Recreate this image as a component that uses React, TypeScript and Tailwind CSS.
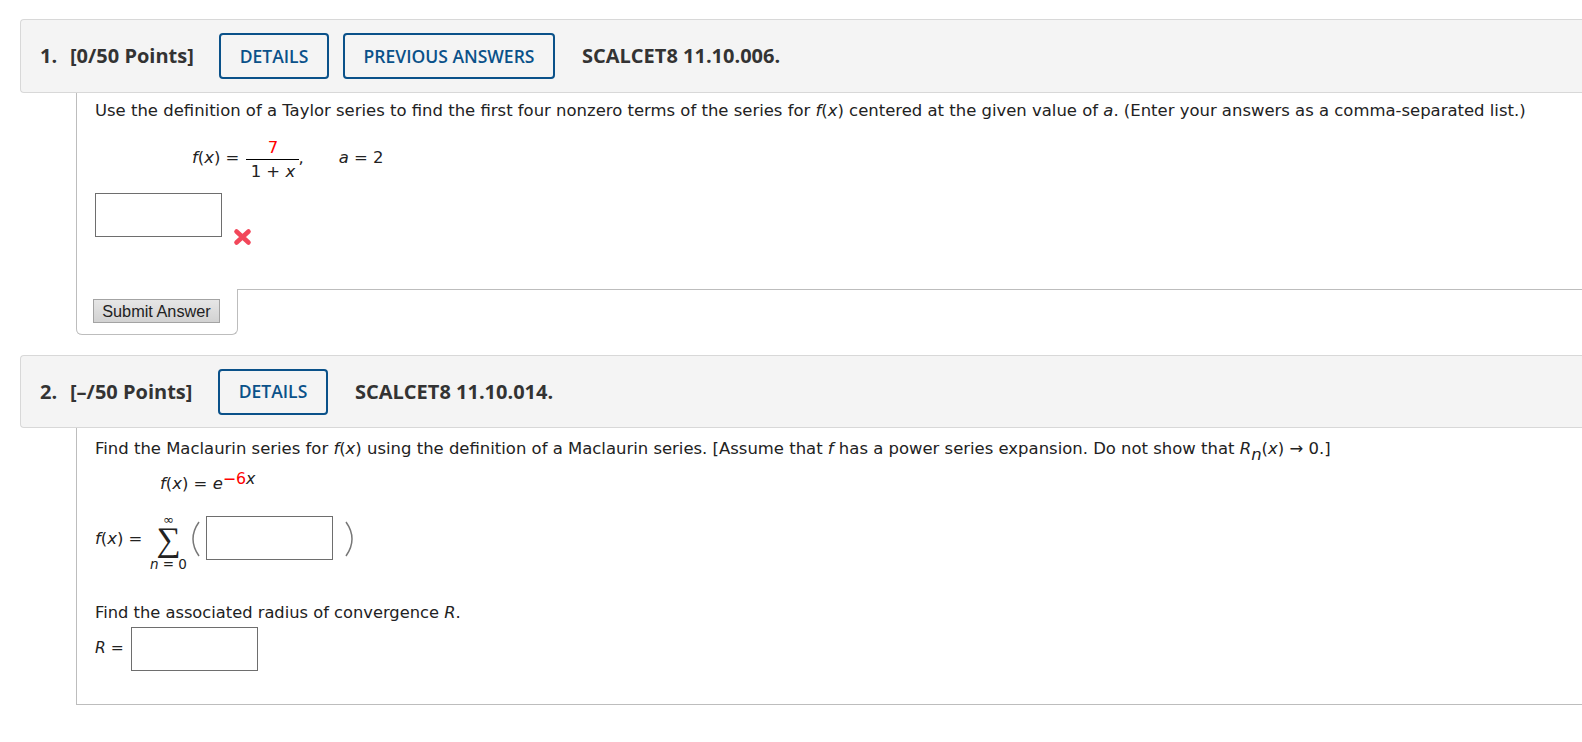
import React from 'react';

const inputBox = 'block h-[44px] w-[127px] border border-[#6e6e6e] bg-white';

function QuestionHeader({ num, points, code, height, detailsX, previous }: { num: string; points: string; code: string; height: string; detailsX: string; previous?: boolean }) {
  return (
    <div className={`ml-5 flex ${height} items-center rounded-l-sm border border-r-0 border-[#d8d8d8] bg-[#f4f4f4] pl-[19px] font-['Open_Sans',sans-serif] text-[#333]`}>
      <span className="w-[30px] text-[20px] font-bold">{num}</span>
      <span className={`${detailsX} text-[20px] font-bold`}>{points}</span>
      <button className="flex h-[46px] w-[110px] items-center justify-center rounded-[4px] border-2 border-[#0a5189] text-[17.5px] font-semibold text-[#0a5189]">DETAILS</button>
      {previous && (
        <button className="ml-[14px] flex h-[46px] w-[212px] items-center justify-center rounded-[4px] border-2 border-[#0a5189] text-[17.5px] font-semibold text-[#0a5189]">PREVIOUS ANSWERS</button>
      )}
      <span className="ml-[27px] text-[20px] font-bold">{code}</span>
    </div>
  );
}

function Paren({ flip }: { flip?: boolean }) {
  return (
    <svg className={flip ? 'ml-[12px] -mt-[8px] -scale-x-100' : 'ml-[5px] -mt-[8px]'} width="8" height="36" viewBox="0 0 8 36" fill="none">
      <path d="M7 1 C2 8 1 13 1 18 C1 23 2 28 7 35" stroke="#777" strokeWidth="1.5" />
    </svg>
  );
}

export default function App() {
  return (
    <div className="h-[742px] w-[1582px] overflow-hidden bg-white pt-[19px] font-['DejaVu_Sans',sans-serif] text-[16.47px] text-[#222]">
      <QuestionHeader num="1." points="[0/50 Points]" code="SCALCET8 11.10.006." height="h-[74px]" detailsX="w-[149px]" previous />

      {/* question 1 */}
      <div className="relative ml-[76px] h-[242px] rounded-bl-md border-l border-[#bdbdbd] pl-[18px]">
        <p className="pt-[8px] leading-[20px]">
          Use the definition of a Taylor series to find the first four nonzero terms of the series for <i>f</i>(<i>x</i>) centered at the given value of <i>a</i>. (Enter your answers as a comma-separated list.)
        </p>
        <div className="mt-[16px] flex h-[45px] items-center pl-[97px]">
          <span className="-mt-[2px]"><i>f</i>(<i>x</i>) =</span>
          <span className="ml-[7px] flex w-[53px] flex-col items-center">
            <span className="w-full border-b border-black text-center leading-[23px] text-[#f00]">7</span>
            <span className="leading-[23px]">1 + <i>x</i></span>
          </span>
          <span className="-ml-[1px] mb-[2px]">,</span>
          <span className="-mt-[2px] ml-[35px]"><i>a</i> = 2</span>
        </div>
        <div className="mt-[11px] flex items-end">
          <span className={inputBox} />
          <svg className="mb-[-9px] ml-[11px]" width="19" height="18" viewBox="0 0 19 18">
            <path d="M3.5 3.5 L15.5 14.5 M15.5 3.5 L3.5 14.5" stroke="#f2475a" strokeWidth="4.6" strokeLinecap="round" />
          </svg>
        </div>
        <button className="mt-[62px] -ml-[2px] block h-[24px] w-[127px] border border-[#a3a3a3] bg-gradient-to-b from-[#e6e6e6] to-[#d2d2d2] font-['Liberation_Sans',sans-serif] text-[16.3px] leading-[20px] text-[#222]">Submit Answer</button>
        <div className="absolute bottom-0 left-[-1px] h-[46px] w-[162px] rounded-b-md border-r border-b border-[#bdbdbd]" />
      </div>
      <div className="-mt-[46px] ml-[237px] h-[46px] border-t border-[#bdbdbd]" />

      <div className="h-[20px]" />
      <QuestionHeader num="2." points="[–/50 Points]" code="SCALCET8 11.10.014." height="h-[73px]" detailsX="w-[148px]" />

      {/* question 2 */}
      <div className="ml-[76px] h-[277px] border-b border-l border-[#bdbdbd] pl-[18px]">
        <p className="pt-[11px] leading-[20px]">
          Find the Maclaurin series for <i>f</i>(<i>x</i>) using the definition of a Maclaurin series. [Assume that <i>f</i> has a power series expansion. Do not show that <i>R</i><sub className="bottom-[-6px] text-[16.5px] italic">n</sub>(<i>x</i>) → 0.]
        </p>
        <div className="mt-[13px] h-[24px] pl-[65px] leading-[24px]">
          <i>f</i>(<i>x</i>) = <i>e</i><sup className="top-[-5px] text-[15.8px]"><span className="text-[#f00]">−6</span><i>x</i></sup>
        </div>
        <div className="mt-[10px] flex h-[74px] items-center">
          <span className="-mt-[8px]"><i>f</i>(<i>x</i>) =</span>
          <span className="ml-[7px] flex w-[38px] flex-col items-center leading-[12px]">
            <span className="h-[10px] text-[13px] leading-[10px]">∞</span>
            <span className="font-['Liberation_Serif',serif] text-[34px] leading-[30px]">∑</span>
            <span className="mt-[2px] text-[13.5px] leading-[14px]"><i>n</i> = 0</span>
          </span>
          <Paren />
          <span className={`${inputBox} -mt-[10px] ml-[6px]`} />
          <Paren flip />
        </div>
        <p className="mt-[23px] text-[16.3px] leading-[20px]">Find the associated radius of convergence <i>R</i>.</p>
        <div className="mt-[4px] flex items-center">
          <span className="text-[15.5px]"><i>R</i> =</span>
          <span className={`${inputBox} ml-[7px]`} />
        </div>
      </div>
    </div>
  );
}
